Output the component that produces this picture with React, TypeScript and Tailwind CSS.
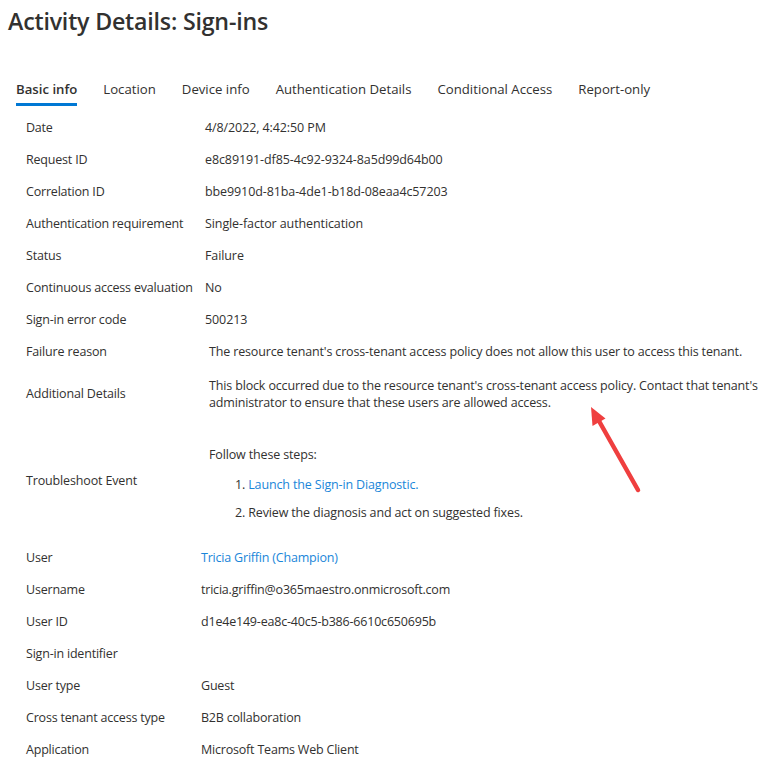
const font = { fontFamily: '"Open Sans", "Noto Sans", sans-serif' };

const tabs = [
  "Basic info",
  "Location",
  "Device info",
  "Authentication Details",
  "Conditional Access",
  "Report-only",
];

const topRows: [string, string][] = [
  ["Date", "4/8/2022, 4:42:50 PM"],
  ["Request ID", "e8c89191-df85-4c92-9324-8a5d99d64b00"],
  ["Correlation ID", "bbe9910d-81ba-4de1-b18d-08eaa4c57203"],
  ["Authentication requirement", "Single-factor authentication"],
  ["Status", "Failure"],
  ["Continuous access evaluation", "No"],
  ["Sign-in error code", "500213"],
];

const userRows: [string, string, boolean?][] = [
  ["User", "Tricia Griffin (Champion)", true],
  ["Username", "tricia.griffin@o365maestro.onmicrosoft.com"],
  ["User ID", "d1e4e149-ea8c-40c5-b386-6610c650695b"],
  ["Sign-in identifier", ""],
  ["User type", "Guest"],
  ["Cross tenant access type", "B2B collaboration"],
  ["Application", "Microsoft Teams Web Client"],
];

// red annotation arrow pointing at the "Additional Details" text
function Arrow() {
  return (
    <svg
      className="pointer-events-none absolute left-0 top-0"
      width={768}
      height={766}
      viewBox="0 0 768 766"
    >
      <line x1={638} y1={490} x2={599} y2={421} stroke="#ef3f3f" strokeWidth={4.5} strokeLinecap="round" />
      <polygon points="591,407 605.5,418.5 592.5,426" fill="#ef3f3f" />
    </svg>
  );
}

export default function App() {
  return (
    <div className="relative h-[766px] w-[768px] overflow-hidden bg-white text-[#323130]" style={font}>
      <h1 className="flex h-[42px] items-center pl-[8px] text-[23.2px] font-semibold tracking-[-0.2px]">
        Activity Details: Sign-ins
      </h1>

      <div className="mt-[31px] flex h-[33px] gap-[26px] pl-[16px] text-[13.2px]">
        {tabs.map((t, i) => (
          <div
            key={t}
            className={`flex items-center whitespace-nowrap border-b-[3px] pt-[3px] ${
              i === 0 ? "border-[#0078d4] font-semibold" : "border-transparent"
            }`}
          >
            {t}
          </div>
        ))}
      </div>

      <div className="mt-[6px] pl-[26px] text-[12.5px] tracking-[-0.2px]">
        {topRows.map(([k, v]) => (
          <div key={k} className="flex h-8 items-center whitespace-nowrap">
            <div className="w-[179px] shrink-0">{k}</div>
            <div className="tracking-[-0.1px]">{v}</div>
          </div>
        ))}

        <div className="tracking-[-0.15px]">
          <div className="flex h-8 items-center">
            <div className="w-[183px] shrink-0">Failure reason</div>
            <div className="whitespace-nowrap">
              The resource tenant's cross-tenant access policy does not allow this user to access this tenant.
            </div>
          </div>
          <div className="flex h-[52px] items-center">
            <div className="w-[183px] shrink-0">Additional Details</div>
            <div className="whitespace-nowrap leading-[17px]">
              This block occurred due to the resource tenant's cross-tenant access policy. Contact that tenant's
              <br />
              administrator to ensure that these users are allowed access.
            </div>
          </div>
          <div className="flex h-[122px] items-center">
            <div className="w-[183px] shrink-0">Troubleshoot Event</div>
            <div className="flex h-full flex-col pt-[21px]">
              <div className="flex h-[28px] items-center">Follow these steps:</div>
              <ol className="mt-[2px] pl-[26px]">
                <li className="flex h-[28px] items-center">
                  1.&nbsp;<span className="text-[#1a86d9]">Launch the Sign-in Diagnostic.</span>
                </li>
                <li className="flex h-[28px] items-center">2. Review the diagnosis and act on suggested fixes.</li>
              </ol>
            </div>
          </div>
        </div>

        {userRows.map(([k, v, link]) => (
          <div key={k} className="flex h-8 items-center whitespace-nowrap">
            <div className="w-[175px] shrink-0">{k}</div>
            <div className={link ? "text-[#1a86d9]" : ""}>{v}</div>
          </div>
        ))}
      </div>

      <Arrow />
    </div>
  );
}
